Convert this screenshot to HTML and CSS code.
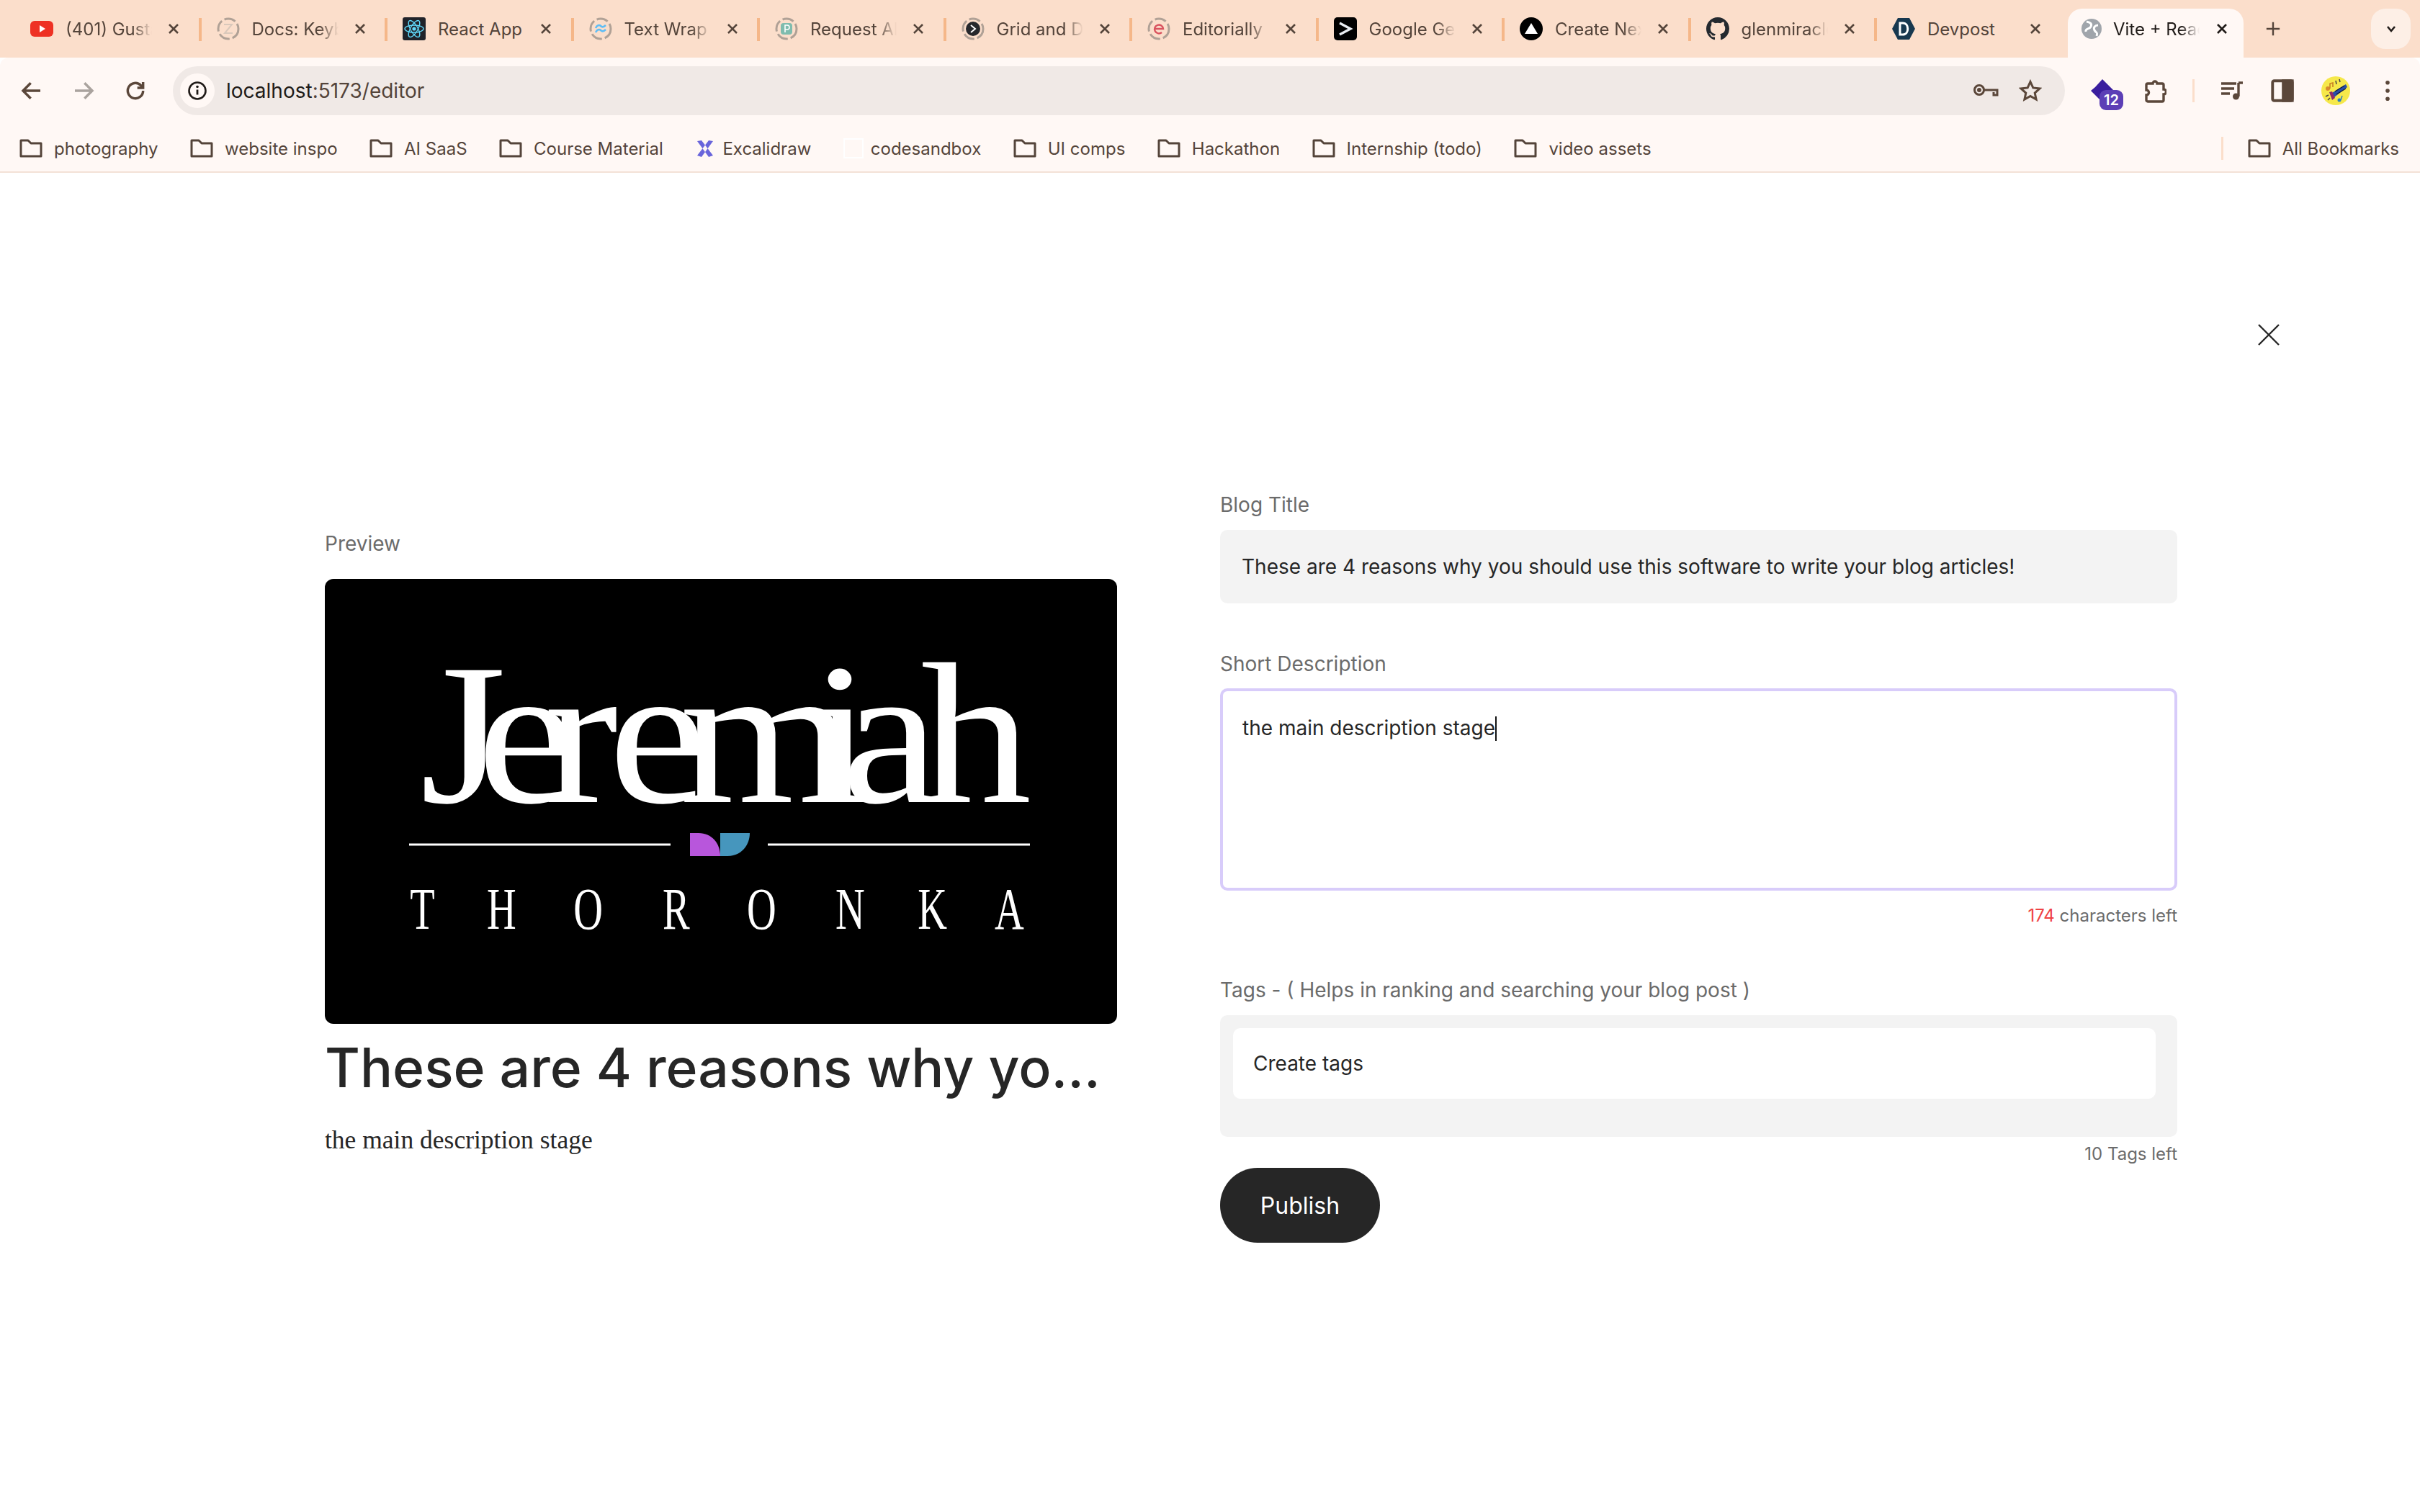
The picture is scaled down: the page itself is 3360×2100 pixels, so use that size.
FILE: index.html
```html
<!DOCTYPE html>
<html lang="en">
  <head>
    <meta charset="UTF-8" />
    <meta name="viewport" content="width=device-width, initial-scale=1.0" />
    <title>Vite + React</title>
    <link rel="stylesheet" href="styles.css">
  </head>
  <body>
    <!-- tab strip -->
    <div class="tabstrip">
      <div class="tab">
        <svg class="favicon" viewBox="0 0 32 32"><rect y="5" width="32" height="22" rx="6" fill="#ee3124"/><path d="M13 11l8 5-8 5z" fill="#fff"/></svg>
        <span class="tabTitle">(401) Gustavo Guanabara</span>
        <svg class="tabClose" viewBox="0 0 16 16"><path d="M2 2l12 12M14 2L2 14"/></svg>
      </div>
      <div class="tab">
        <svg class="favicon" viewBox="0 0 32 32"><circle class="ring" cx="16" cy="16" r="14"/><path d="M10 10h11L11 22h11" fill="none" stroke="#d9c8bb" stroke-width="2"/></svg>
        <span class="tabTitle">Docs: Keyboard shortcuts</span>
        <svg class="tabClose" viewBox="0 0 16 16"><path d="M2 2l12 12M14 2L2 14"/></svg>
      </div>
      <div class="tab">
        <svg class="favicon" viewBox="0 0 32 32"><rect width="32" height="32" rx="3" fill="#20232a"/><g fill="none" stroke="#61dafb" stroke-width="1.4"><ellipse cx="16" cy="16" rx="13" ry="5"/><ellipse cx="16" cy="16" rx="13" ry="5" transform="rotate(60 16 16)"/><ellipse cx="16" cy="16" rx="13" ry="5" transform="rotate(120 16 16)"/></g><circle cx="16" cy="16" r="2.6" fill="#61dafb"/></svg>
        <span class="tabTitle noFade">React App</span>
        <svg class="tabClose" viewBox="0 0 16 16"><path d="M2 2l12 12M14 2L2 14"/></svg>
      </div>
      <div class="tab">
        <svg class="favicon" viewBox="0 0 32 32"><circle class="ring" cx="16" cy="16" r="14"/><path d="M9 15c2-4 5-5 7-3s4 2 7-1M9 21c2-4 5-5 7-3s4 2 7-1" fill="none" stroke="#5fbdf5" stroke-width="2.6"/></svg>
        <span class="tabTitle">Text Wrap - Tailwind</span>
        <svg class="tabClose" viewBox="0 0 16 16"><path d="M2 2l12 12M14 2L2 14"/></svg>
      </div>
      <div class="tab">
        <svg class="favicon" viewBox="0 0 32 32"><circle class="ring" cx="16" cy="16" r="14"/><rect x="8" y="8" width="16" height="16" rx="4" fill="#7fbcae"/><path d="M14 21V11h3a3 3 0 010 6h-3" fill="none" stroke="#fff" stroke-width="1.6"/></svg>
        <span class="tabTitle">Request API access</span>
        <svg class="tabClose" viewBox="0 0 16 16"><path d="M2 2l12 12M14 2L2 14"/></svg>
      </div>
      <div class="tab">
        <svg class="favicon" viewBox="0 0 32 32"><circle class="ring" cx="16" cy="16" r="14"/><circle cx="16" cy="16" r="10" fill="#26282c"/><path d="M13 11l6 5-6 5" fill="none" stroke="#fff" stroke-width="2"/></svg>
        <span class="tabTitle">Grid and Dashboard</span>
        <svg class="tabClose" viewBox="0 0 16 16"><path d="M2 2l12 12M14 2L2 14"/></svg>
      </div>
      <div class="tab">
        <svg class="favicon" viewBox="0 0 32 32"><circle class="ring" cx="16" cy="16" r="14"/><path d="M10 16h12a6 6 0 10-2 5" fill="none" stroke="#d9535f" stroke-width="2.4"/></svg>
        <span class="tabTitle">Editorially</span>
        <svg class="tabClose" viewBox="0 0 16 16"><path d="M2 2l12 12M14 2L2 14"/></svg>
      </div>
      <div class="tab">
        <svg class="favicon" viewBox="0 0 32 32"><rect width="32" height="32" rx="5" fill="#000"/><path d="M8 8l15 8-15 8" fill="none" stroke="#e9edf2" stroke-width="3.4"/></svg>
        <span class="tabTitle">Google Gemini</span>
        <svg class="tabClose" viewBox="0 0 16 16"><path d="M2 2l12 12M14 2L2 14"/></svg>
      </div>
      <div class="tab">
        <svg class="favicon" viewBox="0 0 32 32"><circle cx="16" cy="16" r="16" fill="#000"/><path d="M16 8l9 15H7z" fill="#fff"/></svg>
        <span class="tabTitle">Create Next App</span>
        <svg class="tabClose" viewBox="0 0 16 16"><path d="M2 2l12 12M14 2L2 14"/></svg>
      </div>
      <div class="tab">
        <svg class="favicon" viewBox="0 0 16 16"><path fill="#24292f" d="M8 0C3.58 0 0 3.58 0 8c0 3.54 2.29 6.53 5.47 7.59.4.07.55-.17.55-.38 0-.19-.01-.82-.01-1.49-2.01.37-2.53-.49-2.69-.94-.09-.23-.48-.94-.82-1.13-.28-.15-.68-.52-.01-.53.63-.01 1.08.58 1.23.82.72 1.21 1.87.87 2.33.66.07-.52.28-.87.51-1.07-1.78-.2-3.64-.89-3.64-3.95 0-.87.31-1.59.82-2.15-.08-.2-.36-1.02.08-2.12 0 0 .67-.21 2.2.82.64-.18 1.32-.27 2-.27s1.36.09 2 .27c1.53-1.04 2.2-.82 2.2-.82.44 1.1.16 1.92.08 2.12.51.56.82 1.27.82 2.15 0 3.07-1.87 3.75-3.65 3.95.29.25.54.73.54 1.48 0 1.07-.01 1.93-.01 2.2 0 .21.15.46.55.38A8.01 8.01 0 0016 8c0-4.42-3.58-8-8-8z"/></svg>
        <span class="tabTitle">glenmiracle/chatgpt</span>
        <svg class="tabClose" viewBox="0 0 16 16"><path d="M2 2l12 12M14 2L2 14"/></svg>
      </div>
      <div class="tab lastTab">
        <svg class="favicon" viewBox="0 0 32 32"><path d="M8 1h16l8 15-8 15H8L0 16z" fill="#17384f"/><path d="M11 8v16h4c9 0 9-16 0-16z" fill="none" stroke="#fff" stroke-width="3"/></svg>
        <span class="tabTitle noFade">Devpost</span>
        <svg class="tabClose" viewBox="0 0 16 16"><path d="M2 2l12 12M14 2L2 14"/></svg>
      </div>
      <div class="tab activeTab">
        <svg class="favicon" viewBox="0 0 32 32"><circle cx="16" cy="16" r="14" fill="#a0a5ab"/><path d="M9 6c5 1 8 3 6 7s-8 2-7 7M25 11c-4 0-7 3-5 7s5 2 3 8" fill="none" stroke="#fff" stroke-width="3"/></svg>
        <span class="tabTitle">Vite + React</span>
        <svg class="tabClose" viewBox="0 0 16 16"><path d="M2 2l12 12M14 2L2 14"/></svg>
      </div>
      <svg class="newTab" viewBox="0 0 24 24"><path d="M12 2v20M2 12h20"/></svg>
      <div class="tabMenu">
        <svg viewBox="0 0 16 16"><path d="M3 5l5 6 5-6"/></svg>
      </div>
    </div>

    <!-- toolbar -->
    <div class="toolbar">
      <div class="navIcons">
        <svg class="toolIcon" viewBox="0 0 24 24"><path d="M21 12H4M11 4l-8 8 8 8"/></svg>
        <svg class="toolIcon disabled" viewBox="0 0 24 24"><path d="M3 12h17M13 4l8 8-8 8"/></svg>
        <svg class="toolIcon" viewBox="0 0 24 24"><path d="M20 12a8 8 0 11-2.4-5.7L20 9M20 3v6h-6"/></svg>
      </div>
      <div class="omnibox">
        <div class="siteInfo">
          <svg viewBox="0 0 28 28"><circle cx="14" cy="14" r="11.5" fill="none" stroke="#1f1a17" stroke-width="2.6"/><path d="M14 12.5v7" stroke="#1f1a17" stroke-width="2.8"/><circle cx="14" cy="8.5" r="1.8" fill="#1f1a17"/></svg>
        </div>
        <div class="url">localhost<span class="urlRest">:5173/editor</span></div>
        <svg class="omniIcon keyIcon" viewBox="0 0 36 24"><circle cx="9" cy="11" r="6.5"/><path d="M15.500 11H34v7h-5v-4"/><circle cx="9" cy="11" r="1.500"/></svg>
        <svg class="omniIcon" viewBox="0 0 32 32"><path d="M16 3.5l3.800 8.400 9.200 1-6.800 6.200 1.900 9L16 23.500l-8.100 4.600 1.900-9L3 12.900l9.200-1z"/></svg>
      </div>
      <div class="extIcons">
        <div class="extBadgeWrap">
          <svg class="extDiamond" viewBox="0 0 32 32"><path d="M16 0l16 16-8 8-8 8L0 16l6-5z" fill="#3a1d9e"/></svg>
          <span class="extBadge">12</span>
        </div>
        <svg class="toolIcon puzzle" viewBox="0 0 32 34"><path d="M6 7h7a3 3 0 016 0h7a2 2 0 012 2v6a3.500 3.500 0 010 7v8a2 2 0 01-2 2H6a2 2 0 01-2-2v-7a3.500 3.500 0 000-7V9a2 2 0 012-2z"/></svg>
        <div class="toolSep"></div>
        <svg class="toolIcon queue" viewBox="0 0 32 32"><path d="M1 6h21M1 13h18M1 20h12M25 5v19M25 5h6"/><circle cx="21.500" cy="24" r="4.500" fill="#5b473a" stroke="none"/></svg>
        <svg class="toolIcon sidePanel" viewBox="0 0 28 28"><rect x="2" y="2" width="24" height="24" rx="2"/><rect x="15" y="2" width="11" height="24" fill="#5b473a"/></svg>
        <svg class="avatar" viewBox="0 0 40 40"><circle cx="20" cy="20" r="20" fill="#f6e84a"/><path d="M15 23L34 11l2 4-18 14z" fill="#2a4fa8"/><path d="M11 22l4-1 4 9-4 3z" fill="#8f2a6b"/><path d="M19 21l13-8M21 25l13-8" stroke="#111b3a" stroke-width="1.200"/><circle cx="9" cy="17" r="3" fill="#d98a2b"/><path d="M12 17V10l4-1v6" fill="none" stroke="#c67a22" stroke-width="1.500"/><circle cx="25" cy="33" r="2.500" fill="#2a7fc0"/><path d="M27 33l2-6" stroke="#2a7fc0" stroke-width="1.500"/><path d="M20 6l1 5M25 4l1 4M6 28l4-2M9 33l3-3" stroke="#444" stroke-width="1.500"/></svg>
        <svg class="kebab" viewBox="0 0 8 32"><circle cx="4" cy="4" r="3"/><circle cx="4" cy="16" r="3"/><circle cx="4" cy="28" r="3"/></svg>
      </div>
    </div>

    <!-- bookmarks -->
    <div class="bookmarks">
      <div class="bookmark"><svg class="folder" viewBox="0 0 32 28"><path d="M2 25V3h10l4 4h14v18z"/></svg>photography</div>
      <div class="bookmark"><svg class="folder" viewBox="0 0 32 28"><path d="M2 25V3h10l4 4h14v18z"/></svg>website inspo</div>
      <div class="bookmark"><svg class="folder" viewBox="0 0 32 28"><path d="M2 25V3h10l4 4h14v18z"/></svg>AI SaaS</div>
      <div class="bookmark"><svg class="folder" viewBox="0 0 32 28"><path d="M2 25V3h10l4 4h14v18z"/></svg>Course Material</div>
      <div class="bookmark"><svg class="siteIcon" viewBox="0 0 28 28"><path d="M3 4l6-1 16 21-6 2zM25 4l-6-1L3 24l6 2z" fill="#6965db"/></svg>Excalidraw</div>
      <div class="bookmark"><svg class="siteIcon" viewBox="0 0 28 28"><rect x="1" y="1" width="26" height="26" fill="none" stroke="#fff" stroke-width="2"/></svg>codesandbox</div>
      <div class="bookmark"><svg class="folder" viewBox="0 0 32 28"><path d="M2 25V3h10l4 4h14v18z"/></svg>UI comps</div>
      <div class="bookmark"><svg class="folder" viewBox="0 0 32 28"><path d="M2 25V3h10l4 4h14v18z"/></svg>Hackathon</div>
      <div class="bookmark"><svg class="folder" viewBox="0 0 32 28"><path d="M2 25V3h10l4 4h14v18z"/></svg>Internship (todo)</div>
      <div class="bookmark"><svg class="folder" viewBox="0 0 32 28"><path d="M2 25V3h10l4 4h14v18z"/></svg>video assets</div>
      <div class="bookmarkEnd">
        <div class="bookmarkSep"></div>
        <div class="bookmark"><svg class="folder" viewBox="0 0 32 28"><path d="M2 25V3h10l4 4h14v18z"/></svg>All Bookmarks</div>
      </div>
    </div>

    <!-- publish form -->
    <main class="page">
      <div class="closeRow">
        <svg class="closeBtn" viewBox="0 0 32 32"><path d="M2 2l28 28M30 2L2 30"/></svg>
      </div>
      <section class="editor">
        <div class="previewCol">
          <p class="fieldLabel previewLabel">Preview</p>
          <div class="banner">
            <svg class="logo" viewBox="451 804 1100 618">
              <text class="logoName" y="1114" transform="scale(1.1 1)" x="530 602 687 768 858 1023 1062 1162">Jeremiah</text>
              <path d="M568 1173h363M1066 1173h364" stroke="#fff" stroke-width="3"/>
              <path d="M958 1157h12c18 0 30 14 30 32h-42z" fill="#b856dc"/>
              <path d="M1000 1157h41c0 18-13 32-31 32h-10z" fill="#4696bd"/>
              <text class="logoSurname" y="1290" transform="scale(.68 1)" x="837 994 1171 1353 1525 1706 1874 2031">THORONKA</text>
            </svg>
          </div>
          <h1 class="previewTitle">These are 4 reasons why you should use this software to write your blog articles!</h1>
          <p class="previewDes">the main description stage</p>
        </div>
        <div class="formCol">
          <p class="fieldLabel">Blog Title</p>
          <div class="field titleField">These are 4 reasons why you should use this software to write your blog articles!</div>
          <p class="fieldLabel desLabel">Short Description</p>
          <div class="desField">the main description stage<span class="caret"></span></div>
          <p class="hint"><span class="red">174</span> characters left</p>
          <p class="fieldLabel tagsLabel">Tags - ( Helps in ranking and searching your blog post )</p>
          <div class="tagsBox">
            <div class="tagsInput">Create tags</div>
          </div>
          <p class="hint tagsHint">10 Tags left</p>
          <button class="publishBtn">Publish</button>
        </div>
      </section>
    </main>
  </body>
</html>
```

FILE: styles.css
```css
* {
  box-sizing: border-box;
}
body {
  margin: 0;
  height: 2100px;
  overflow: hidden;
  background: #fff;
  font-family: Inter, "Noto Sans", sans-serif;
  color: #262626;
}
p,
h1 {
  margin: 0;
}

/* tabs */
.tabstrip {
  display: flex;
  align-items: flex-start;
  height: 80px;
  padding: 12px 13px 0 21px;
  background: #fbdecb;
}
.tab {
  position: relative;
  display: flex;
  align-items: center;
  flex: none;
  width: 258.5px;
  height: 56px;
  padding: 0 0 0 21px;
  color: #54443a;
  font-size: 24px;
}
.tab::after {
  content: "";
  position: absolute;
  right: 0;
  top: 13px;
  width: 4px;
  height: 32px;
  background: #f5b789;
}
.lastTab::after,
.activeTab::after {
  display: none;
}
.activeTab {
  width: 244px;
  height: 68px;
  margin-left: 6.5px;
  padding-bottom: 12px;
  padding-left: 17px;
  border-radius: 20px 20px 0 0;
  background: #fff8f5;
  color: #201b18;
}
.activeTab .favicon {
  margin-right: 14px;
}
.favicon {
  flex: none;
  width: 32px;
  height: 32px;
  margin-right: 17px;
}
.ring {
  fill: none;
  stroke: #b0a196;
  stroke-width: 3;
  stroke-dasharray: 16 4;
}
.tabTitle {
  flex: none;
  width: 120px;
  overflow: hidden;
  white-space: nowrap;
  mask-image: linear-gradient(to right, #000 78%, transparent 100%);
}
.noFade {
  mask-image: none;
}
.tabClose {
  flex: none;
  width: 16px;
  height: 16px;
  margin-left: 22px;
  fill: none;
  stroke: currentColor;
  stroke-width: 2.6;
}
.activeTab .tabClose {
  margin-left: 23px;
}
.newTab {
  width: 22px;
  height: 22px;
  margin: 17px 0 0 30px;
  fill: none;
  stroke: #54443a;
  stroke-width: 2.6;
}
.tabMenu {
  display: flex;
  align-items: center;
  justify-content: center;
  width: 55px;
  height: 56px;
  margin-left: auto;
  border-radius: 20px;
  background: #fdefe6;
}
.tabMenu svg {
  width: 16px;
  height: 16px;
  fill: none;
  stroke: #201b18;
  stroke-width: 2.6;
}

/* toolbar */
.toolbar {
  display: flex;
  align-items: center;
  height: 94px;
  padding: 0 24px 2px 28px;
  border-radius: 12px 12px 0 0;
  background: #fff8f5;
}
.navIcons {
  display: flex;
  gap: 40px;
  width: 212px;
}
.toolIcon {
  flex: none;
  width: 32px;
  height: 32px;
  fill: none;
  stroke: #5b473a;
  stroke-width: 2.6;
}
.disabled {
  stroke: #aaa39e;
}
.omnibox {
  display: flex;
  align-items: center;
  width: 2627px;
  height: 68px;
  padding: 0 32px 0 10px;
  border-radius: 34px;
  background: #f0e9e6;
}
.siteInfo {
  display: flex;
  align-items: center;
  justify-content: center;
  width: 48px;
  height: 48px;
  border-radius: 50%;
  background: #fff8f5;
}
.siteInfo svg {
  width: 28px;
  height: 28px;
}
.url {
  flex: 1;
  margin-left: 16px;
  font-size: 28px;
  color: #201b18;
}
.urlRest {
  color: #54443a;
}
.omniIcon {
  fill: none;
  stroke: #5b473a;
  stroke-width: 3;
  width: 32px;
  height: 32px;
}
.keyIcon {
  width: 36px;
  height: 24px;
  margin-right: 28px;
}
.extIcons {
  display: flex;
  align-items: center;
  margin-left: 32px;
}
.extBadgeWrap {
  position: relative;
  width: 48px;
  height: 48px;
}
.extDiamond {
  position: absolute;
  left: 4px;
  top: 8px;
  width: 32px;
  height: 32px;
}
.extBadge {
  position: absolute;
  right: -1px;
  bottom: -3px;
  width: 33px;
  height: 28px;
  border-radius: 9px;
  background: #5c3fb6;
  color: #fff;
  font-size: 20px;
  font-weight: 600;
  line-height: 28px;
  text-align: center;
}
.puzzle {
  margin-left: 29px;
  width: 32px;
  height: 34px;
  stroke-width: 3.4;
}
.toolSep {
  width: 3px;
  height: 32px;
  margin-left: 36px;
  background: #fbdecb;
}
.queue {
  margin-left: 36px;
  stroke-width: 3.4;
}
.sidePanel {
  margin-left: 38px;
  stroke-width: 3.4;
}
.avatar {
  width: 40px;
  height: 40px;
  margin-left: 38px;
}
.kebab {
  width: 8px;
  height: 30px;
  margin-left: 48px;
  fill: #5b473a;
}

/* bookmarks */
.bookmarks {
  display: flex;
  align-items: center;
  gap: 44.5px;
  height: 66px;
  padding: 0 29px 0 27px;
  border-bottom: 2px solid #f3e1d7;
  background: #fff8f5;
  font-size: 24px;
  color: #54443a;
}
.bookmark {
  display: flex;
  align-items: center;
  gap: 16px;
  white-space: nowrap;
}
.folder {
  width: 32px;
  height: 28px;
  fill: none;
  stroke: #54443a;
  stroke-width: 3;
  stroke-linejoin: round;
}
.siteIcon {
  width: 28px;
  height: 28px;
  margin-right: -6px;
}
.bookmarkEnd {
  display: flex;
  align-items: center;
  gap: 34px;
  margin-left: auto;
}
.bookmarkSep {
  width: 3px;
  height: 32px;
  background: #fbdecb;
}

/* page */
.page {
  padding: 0 0 0 451px;
}
.closeRow {
  display: flex;
  justify-content: flex-end;
  padding: 209px 194px 0 0;
}
.closeBtn {
  width: 32px;
  height: 32px;
  fill: none;
  stroke: #262626;
  stroke-width: 2.4;
}
.editor {
  display: flex;
  gap: 143px;
  margin-top: 200px;
}
.previewCol {
  flex: none;
  width: 1100px;
  padding-top: 54px;
}
.fieldLabel {
  font-size: 28px;
  line-height: 40px;
  color: #6b6b6b;
}
.previewLabel {
  margin-bottom: 29px;
}
.banner {
  height: 618px;
  border-radius: 12px;
  overflow: hidden;
  background: #000;
}
.logo {
  display: block;
  width: 100%;
  height: 100%;
}
.logoName,
.logoSurname {
  fill: #fff;
  font-family: "Liberation Serif", serif;
}
.logoName {
  font-size: 280px;
}
.logoSurname {
  font-size: 83px;
}
.previewTitle {
  margin-top: 17px;
  font-size: 75px;
  font-weight: 500;
  line-height: 88px;
  white-space: nowrap;
  overflow: hidden;
  text-overflow: ellipsis;
}
.previewDes {
  margin-top: 34px;
  font-family: "Liberation Serif", serif;
  font-size: 35.5px;
  line-height: 44px;
  color: #262626;
}
.formCol {
  flex: none;
  width: 1329px;
}
.field,
.tagsBox {
  border-radius: 10px;
  background: #f3f3f3;
}
.titleField {
  height: 102px;
  margin-top: 15px;
  padding: 0 30px;
  font-size: 28px;
  line-height: 102px;
  white-space: nowrap;
}
.desLabel {
  margin-top: 64px;
}
.desField {
  height: 281px;
  margin-top: 14px;
  padding: 29px 27px;
  border: 4px solid #d8ccfa;
  border-radius: 10px;
  font-size: 28px;
  line-height: 44px;
}
.caret {
  display: inline-block;
  width: 2px;
  height: 34px;
  vertical-align: -8px;
  background: #111;
}
.hint {
  margin-top: 20px;
  font-size: 24px;
  line-height: 30px;
  text-align: right;
  color: #6b6b6b;
}
.red {
  color: #ef4444;
}
.tagsLabel {
  margin-top: 68px;
}
.tagsBox {
  height: 169px;
  margin-top: 15px;
  padding: 18px 30px 0 18px;
}
.tagsInput {
  height: 98px;
  padding-left: 28px;
  border-radius: 10px;
  background: #fff;
  font-size: 28px;
  line-height: 98px;
}
.tagsHint {
  margin-top: 9px;
}
.publishBtn {
  display: block;
  width: 222px;
  height: 104px;
  margin-top: 4px;
  border: none;
  border-radius: 52px;
  background: #262626;
  color: #fff;
  font-family: inherit;
  font-size: 32px;
}
```
